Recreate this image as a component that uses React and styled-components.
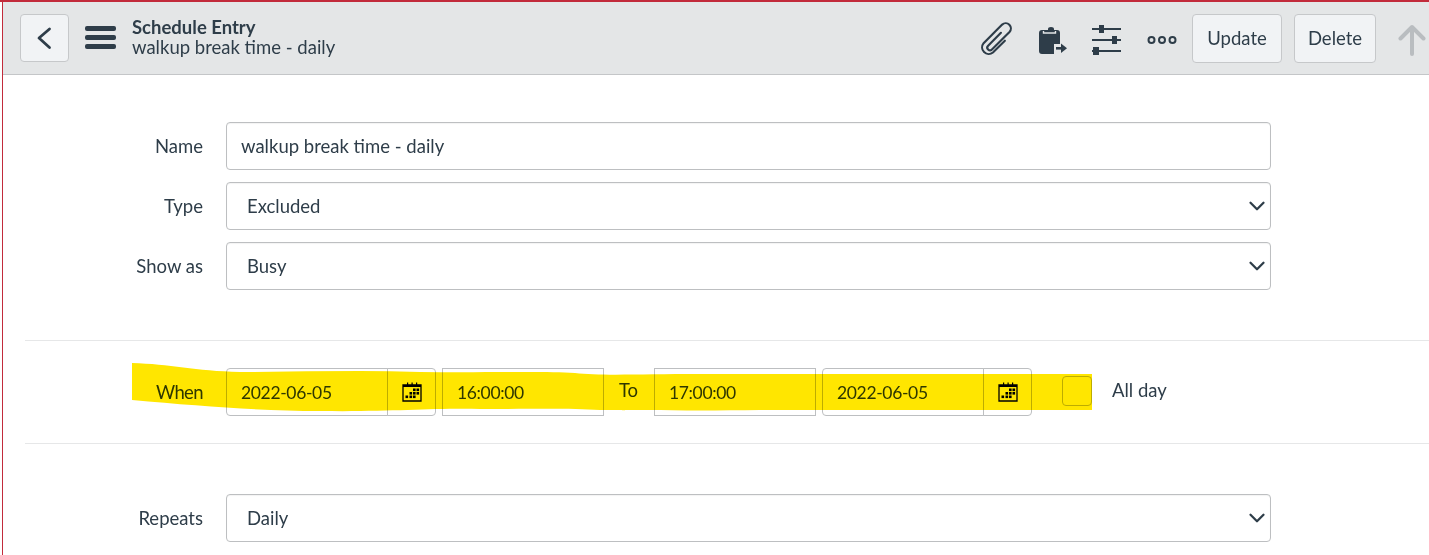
import React from "react";
import styled, { createGlobalStyle } from "styled-components";
import { ChevronDown } from "lucide-react";

const GlobalStyle = createGlobalStyle`
  html, body {
    margin: 0;
    padding: 0;
    background: #fff;
    overflow: hidden;
  }
  * {
    box-sizing: border-box;
  }
`;

const FONT = `"Lato", "Open Sans", sans-serif`;
const INK = "#2e3d49";

const Page = styled.div`
  position: relative;
  width: 1429px;
  height: 555px;
  overflow: hidden;
  border-top: 2px solid #c22b3b;
  font-family: ${FONT};
  color: ${INK};
`;

const Shell = styled.div`
  margin-left: 2px;
  height: 100%;
  border-left: 1px solid #c22b3b;
`;

const Header = styled.header`
  display: flex;
  align-items: center;
  height: 73px;
  padding: 0 3px 1px 17px;
  background: #e4e6e7;
  border-bottom: 1px solid #c4c6c8;
`;

const BackButton = styled.button`
  display: flex;
  align-items: center;
  justify-content: center;
  width: 49px;
  height: 48px;
  padding: 0 1px 0 0;
  background: #f1f3f5;
  border: 1px solid #c6c8ca;
  border-radius: 4px;
  color: ${INK};
`;

const Burger = styled.div`
  display: flex;
  flex-direction: column;
  gap: 4px;
  width: 31px;
  margin: 0 16px;
  span {
    height: 5px;
    border-radius: 2px;
    background: ${INK};
  }
`;

const Titles = styled.div`
  flex: 1;
  margin-top: -2px;
  font-size: 18.5px;
  line-height: 20px;
`;

const Title = styled.div`
  font-weight: 700;
`;

const Tool = styled.span`
  display: flex;
  justify-content: center;
  align-items: center;
  width: ${(p) => p.$w}px;
  margin-top: ${(p) => p.$mt}px;
  margin-right: ${(p) => p.$mr}px;
`;

const ActionButton = styled.button`
  width: ${(p) => p.$w}px;
  height: 49px;
  margin: 2px 12px 0 0;
  padding: 0 0 2px;
  background: #f1f3f5;
  border: 1px solid #c6c8ca;
  border-radius: 4px;
  font-family: ${FONT};
  font-size: 18.5px;
  color: ${INK};
`;

const UpArrow = styled.svg`
  margin: 4px 0 0 10px;
  flex: none;
`;

const Section = styled.section`
  padding: ${(p) => p.$pad};
  border-top: ${(p) => (p.$rule ? "1px solid #e6e7e8" : "none")};
  margin-left: ${(p) => (p.$rule ? "22px" : "0")};
  display: flex;
  flex-direction: column;
  gap: 12px;
`;

const Row = styled.div`
  display: flex;
  align-items: center;
  height: 48px;
`;

const Label = styled.label`
  width: ${(p) => p.$w}px;
  padding-right: 23px;
  text-align: right;
  font-size: 18.5px;
  letter-spacing: ${(p) => p.$spacing || 0}px;
  flex: none;
`;

const TextBox = styled.input`
  width: ${(p) => p.$w}px;
  height: 48px;
  padding: 0 14px;
  background: transparent;
  border: 1px solid #bdbfc1;
  border-radius: ${(p) => p.$radius || "4px"};
  font-family: ${FONT};
  font-size: ${(p) => (p.$digits ? "17.5px" : "18.5px")};
  letter-spacing: ${(p) => (p.$digits ? "-0.35px" : "0")};
  color: ${INK};
  outline: none;
  box-shadow: ${(p) => (p.$digits ? "none" : "inset 0 1px 1px rgba(0, 0, 0, 0.05)")};
`;

const SelectWrap = styled.div`
  position: relative;
  width: 1045px;
  height: 48px;
  svg {
    position: absolute;
    right: 1px;
    top: 11px;
    pointer-events: none;
  }
`;

const Select = styled.select`
  appearance: none;
  width: 100%;
  height: 100%;
  padding: 0 14px 0 20px;
  background: #fff;
  border: 1px solid #bdbfc1;
  border-radius: 4px;
  font-family: ${FONT};
  font-size: 18.5px;
  color: ${INK};
  box-shadow: inset 0 1px 1px rgba(0, 0, 0, 0.05);
`;

const DateGroup = styled.div`
  display: flex;
  margin: 0 ${(p) => p.$mr || 0}px 0 ${(p) => p.$ml || 0}px;
`;

const CalendarButton = styled.span`
  display: flex;
  align-items: center;
  justify-content: center;
  width: 49px;
  height: 48px;
  margin-left: -1px;
  border: 1px solid #bdbfc1;
  border-radius: 0 4px 4px 0;
`;

const ToLabel = styled.span`
  width: 50px;
  padding-right: 1px;
  text-align: center;
  font-size: 18.5px;
  position: relative;
  top: -2px;
`;

const Check = styled.span`
  width: 30px;
  height: 30px;
  margin: 0 20px 0 30px;
  border: 1px solid #bdbfc1;
  border-radius: 4px;
  position: relative;
  top: -1px;
`;

const AllDay = styled.span`
  font-size: 18.5px;
  position: relative;
  top: -2px;
`;

const Highlight = styled.svg`
  position: absolute;
  left: 0;
  top: -2px;
  mix-blend-mode: multiply;
  pointer-events: none;
`;

const BackChevron = () => (
  <svg width="16" height="24" viewBox="0 0 16 24" fill="none" stroke={INK} strokeWidth="2.8" strokeLinecap="round" strokeLinejoin="round">
    <path d="M13.5 3 L3 12 L13.5 21.5" />
  </svg>
);

const Paperclip = () => (
  <svg width="36" height="34" viewBox="0 0 32 30" fill="none" stroke={INK} strokeWidth="1.9" strokeLinecap="round">
    <path d="M19 9 L7.6 20.4 a2.4 2.4 0 0 0 3.4 3.4 L26.6 8.2 a4.6 4.6 0 0 0 -6.5 -6.5 L3.6 18.2 a5.9 5.9 0 0 0 8.3 8.3 L22.5 16" transform="translate(0.5 0.5)" />
  </svg>
);

const ClipboardOut = () => (
  <svg width="28" height="29" viewBox="0 0 28 29" fill={INK}>
    <path d="M9 2 Q9 0 12 0 Q15 0 15 2 V3 H18 a3 3 0 0 1 3 3 V17 H15 V27 H3 a3 3 0 0 1 -3 -3 V6 a3 3 0 0 1 3 -3 H9 Z" />
    <path d="M4.5 4 V6 H16.5 V4" fill="none" stroke="#e4e6e7" strokeWidth="1.4" />
    <rect x="17" y="20" width="6" height="2.6" />
    <path d="M22 16.5 L28 21.3 L22 26 Z" />
  </svg>
);

const Sliders = () => (
  <svg width="30" height="30" viewBox="0 0 30 30" fill={INK}>
    <rect x="0" y="3" width="29" height="2" />
    <rect x="7" y="0" width="5" height="8" />
    <rect x="0" y="14" width="29" height="2" />
    <rect x="20" y="11" width="5" height="8" />
    <rect x="0" y="25" width="29" height="2" />
    <rect x="1" y="22" width="6" height="8" />
  </svg>
);

const Dots = () => (
  <svg width="30" height="10" viewBox="0 0 30 10" fill="none" stroke={INK} strokeWidth="2">
    <circle cx="4.5" cy="5" r="3" />
    <circle cx="15" cy="5" r="3" />
    <circle cx="25.5" cy="5" r="3" />
  </svg>
);

const Calendar = () => (
  <svg width="20" height="20" viewBox="0 0 20 20" fill="#000">
    <path d="M1 3 H19 V19 H1 Z" fill="none" stroke="#000" strokeWidth="1.3" />
    <rect x="1" y="3" width="18" height="2" />
    <rect x="5" y="0.5" width="1.2" height="3.5" />
    <rect x="9.5" y="0.5" width="1.2" height="3.5" />
    <rect x="14" y="0.5" width="1.2" height="3.5" />
    <rect x="11" y="6.5" width="2.6" height="2.6" />
    <rect x="14.5" y="6.5" width="2.6" height="2.6" />
    <rect x="7.5" y="10" width="2.6" height="2.6" />
    <rect x="11" y="10" width="2.6" height="2.6" />
    <rect x="14.5" y="10" width="2.6" height="2.6" />
    <rect x="3.5" y="13.5" width="2.6" height="2.6" />
    <rect x="7.5" y="13.5" width="2.6" height="2.6" />
    <rect x="11" y="13.5" width="2.6" height="2.6" />
  </svg>
);

const Chevron = () => <ChevronDown size={26} strokeWidth={2.1} color={INK} />;

export default function App() {
  return (
    <Page>
      <GlobalStyle />
      <Shell>
        <Header>
          <BackButton>
            <BackChevron />
          </BackButton>
          <Burger>
            <span />
            <span />
            <span />
          </Burger>
          <Titles>
            <Title>Schedule Entry</Title>
            <div>walkup break time - daily</div>
          </Titles>
          <Tool $w={36} $mt={3} $mr={24}>
            <Paperclip />
          </Tool>
          <Tool $w={28} $mt={7} $mr={25}>
            <ClipboardOut />
          </Tool>
          <Tool $w={30} $mt={5} $mr={25}>
            <Sliders />
          </Tool>
          <Tool $w={30} $mt={4} $mr={15}>
            <Dots />
          </Tool>
          <ActionButton $w={90}>Update</ActionButton>
          <ActionButton $w={82}>Delete</ActionButton>
          <UpArrow width="28" height="32" viewBox="0 0 28 32" fill="none" stroke="#b9bdc0" strokeWidth="4" strokeLinecap="round" strokeLinejoin="round">
            <path d="M2.5 14.5 L14 3 L25.5 14.5 M14 3 V30" />
          </UpArrow>
        </Header>

        <Section $pad="47px 0 50px 0">
          <Row>
            <Label $w={223}>Name</Label>
            <TextBox $w={1045} defaultValue="walkup break time - daily" readOnly />
          </Row>
          <Row>
            <Label $w={223}>Type</Label>
            <SelectWrap>
              <Select defaultValue="Excluded">
                <option>Excluded</option>
              </Select>
              <Chevron />
            </SelectWrap>
          </Row>
          <Row>
            <Label $w={223}>Show as</Label>
            <SelectWrap>
              <Select defaultValue="Busy">
                <option>Busy</option>
              </Select>
              <Chevron />
            </SelectWrap>
          </Row>
        </Section>

        <Section $rule $pad="27px 0 27px 0">
          <Row>
            <Label $w={201} $spacing={-0.6}>When</Label>
            <DateGroup $mr={6}>
              <TextBox $w={162} $radius="4px 0 0 4px" $digits defaultValue="2022-06-05" readOnly />
              <CalendarButton>
                <Calendar />
              </CalendarButton>
            </DateGroup>
            <TextBox $w={162} $radius="0" $digits defaultValue="16:00:00" readOnly />
            <ToLabel>To</ToLabel>
            <TextBox $w={162} $radius="0" $digits defaultValue="17:00:00" readOnly />
            <DateGroup $ml={6}>
              <TextBox $w={162} $radius="4px 0 0 4px" $digits defaultValue="2022-06-05" readOnly />
              <CalendarButton>
                <Calendar />
              </CalendarButton>
            </DateGroup>
            <Check />
            <AllDay>All day</AllDay>
          </Row>
        </Section>

        <Section $rule $pad="50px 0 0 0">
          <Row>
            <Label $w={201}>Repeats</Label>
            <SelectWrap>
              <Select defaultValue="Daily">
                <option>Daily</option>
              </Select>
              <Chevron />
            </SelectWrap>
          </Row>
        </Section>
      </Shell>

      <Highlight width="1429" height="555" viewBox="0 0 1429 555">
        <path
          d="M132 363 C170 364 195 371 240 372 C300 372 360 370 420 372 C480 373 540 371 575 373 C600 376 640 374 700 374 L1092 374 L1092 410 L760 410 C700 411 640 410 600 410 C570 408 530 409 480 409 C430 408 390 412 320 411 C260 411 200 406 132 400 Z"
          fill="#ffe600"
        />
      </Highlight>
    </Page>
  );
}
